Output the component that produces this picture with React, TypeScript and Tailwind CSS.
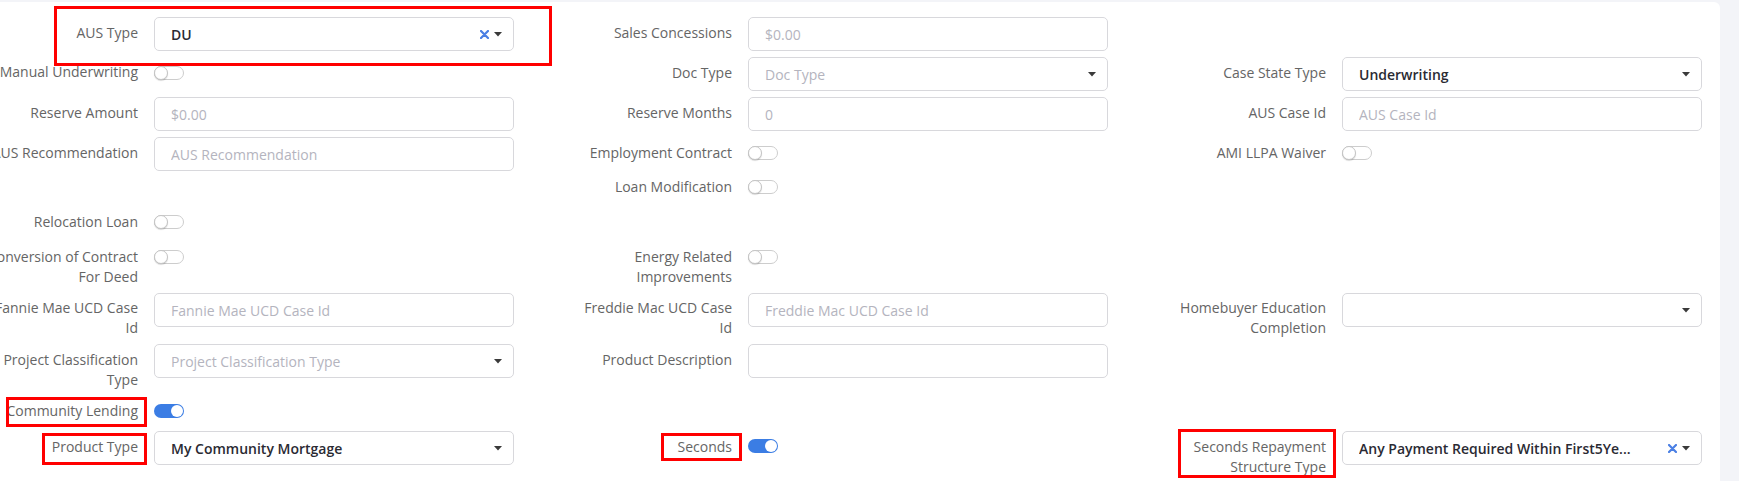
import React from 'react';

type Field =
  | null
  | {
      label: string[];
      kind: 'input' | 'select' | 'toggle';
      placeholder?: string;
      value?: string;
      clear?: boolean;
      on?: boolean;
      lp?: string; // label padding-top
      tp?: string; // toggle padding-top
    };

const LABEL = 'w-[160px] shrink-0 text-right text-[14px] leading-5 text-[#656565]';

function Caret() {
  return (
    <svg width="8" height="5" viewBox="0 0 8 5" className="shrink-0">
      <path d="M0 0h8L4 4.5z" fill="#3a3a3a" />
    </svg>
  );
}

function ClearX() {
  return (
    <svg width="9" height="9" viewBox="0 0 9 9" className="shrink-0">
      <path d="M1 1l7 7M8 1L1 8" stroke="#4a7fe4" strokeWidth="2.2" strokeLinecap="round" />
    </svg>
  );
}

function Toggle({ on }: { on?: boolean }) {
  if (on)
    return (
      <span className="flex h-[14px] w-[30px] items-center justify-end rounded-full bg-[#3b7de4] pr-[1px]">
        <span className="h-[12px] w-[12px] rounded-full bg-white" />
      </span>
    );
  return (
    <span className="flex h-[14px] w-[30px] items-center rounded-full border border-[#cdcdcd] bg-white">
      <span className="ml-[-1px] h-[14px] w-[14px] rounded-full border border-[#c4c4c4] bg-white shadow-[0_1px_1px_rgba(0,0,0,0.15)]" />
    </span>
  );
}

function Control({ f }: { f: NonNullable<Field> }) {
  if (f.kind === 'toggle')
    return (
      <div className={`flex h-[29px] w-[360px] items-start ${f.tp ?? 'pt-[3px]'}`}>
        <Toggle on={f.on} />
      </div>
    );
  const text = f.value ? (
    <span className="truncate text-[14px] font-semibold text-[#2a2a33]">{f.value}</span>
  ) : (
    <span className="truncate text-[14px] text-[#b4b4be]">{f.placeholder ?? ''}</span>
  );
  return (
    <div className="flex h-[34px] w-[360px] items-center rounded-[5px] border border-[#d8d8dc] bg-white pl-[16px] pr-[11px]">
      <div className="flex-1 overflow-hidden">{text}</div>
      {f.kind === 'select' && (
        <div className="flex items-center gap-[5px]">
          {f.clear && <ClearX />}
          <Caret />
        </div>
      )}
    </div>
  );
}

function Cell({ f }: { f: Field }) {
  return (
    <div className="flex w-[594px] shrink-0 items-start gap-4 pl-[40px] pr-[18px]">
      {f && (
        <>
          <div className={`${LABEL} ${f.lp ?? 'pt-[6px]'}`}>
            {f.label.map((l, i) => (
              <div key={i} className="whitespace-nowrap">{l}</div>
            ))}
          </div>
          <Control f={f} />
        </>
      )}
    </div>
  );
}

const rows: Field[][] = [
  [
    { label: ['AUS Type'], kind: 'select', value: 'DU', clear: true },
    { label: ['Sales Concessions'], kind: 'input', placeholder: '$0.00' },
    null,
  ],
  [
    { label: ['Manual Underwriting'], kind: 'toggle', lp: 'pt-[5px]', tp: 'pt-[9px]' },
    { label: ['Doc Type'], kind: 'select', placeholder: 'Doc Type' },
    { label: ['Case State Type'], kind: 'select', value: 'Underwriting' },
  ],
  [
    { label: ['Reserve Amount'], kind: 'input', placeholder: '$0.00' },
    { label: ['Reserve Months'], kind: 'input', placeholder: '0' },
    { label: ['AUS Case Id'], kind: 'input', placeholder: 'AUS Case Id' },
  ],
  [
    { label: ['AUS Recommendation'], kind: 'input', placeholder: 'AUS Recommendation' },
    { label: ['Employment Contract'], kind: 'toggle', lp: 'pt-[6px]', tp: 'pt-[9px]' },
    { label: ['AMI LLPA Waiver'], kind: 'toggle', lp: 'pt-[6px]', tp: 'pt-[9px]' },
  ],
  [null, { label: ['Loan Modification'], kind: 'toggle', lp: 'pt-0', tp: 'pt-[3px]' }, null],
  [{ label: ['Relocation Loan'], kind: 'toggle', lp: 'pt-0', tp: 'pt-[3px]' }, null, null],
  [
    { label: ['Conversion of Contract', 'For Deed'], kind: 'toggle', lp: 'pt-0', tp: 'pt-[3px]' },
    { label: ['Energy Related', 'Improvements'], kind: 'toggle', lp: 'pt-0', tp: 'pt-[3px]' },
    null,
  ],
  [
    { label: ['Fannie Mae UCD Case', 'Id'], kind: 'input', placeholder: 'Fannie Mae UCD Case Id', lp: 'pt-[5px]' },
    { label: ['Freddie Mac UCD Case', 'Id'], kind: 'input', placeholder: 'Freddie Mac UCD Case Id', lp: 'pt-[5px]' },
    { label: ['Homebuyer Education', 'Completion'], kind: 'select', lp: 'pt-[5px]' },
  ],
  [
    { label: ['Project Classification', 'Type'], kind: 'select', placeholder: 'Project Classification Type' },
    { label: ['Product Description'], kind: 'input' },
    null,
  ],
  [{ label: ['Community Lending'], kind: 'toggle', on: true, lp: 'pt-[5px]', tp: 'pt-[8px]' }, null, null],
  [
    { label: ['Product Type'], kind: 'select', value: 'My Community Mortgage' },
    { label: ['Seconds'], kind: 'toggle', on: true, lp: 'pt-[6px]', tp: 'pt-[8px]' },
    {
      label: ['Seconds Repayment', 'Structure Type'],
      kind: 'select',
      value: 'Any Payment Required Within First5Ye...',
      clear: true,
    },
  ],
];

export default function App() {
  return (
    <div
      className="relative h-[481px] w-[1739px] overflow-hidden bg-[#f3f4f8]"
      style={{ fontFamily: '"Open Sans", "Noto Sans", sans-serif' }}
    >
      <div className="mt-[2px] h-[479px] w-[1720px] overflow-hidden rounded-tr-[6px] bg-white">
        <div className="ml-[-62px] w-[1782px] pt-[15px]">
          {rows.map((r, i) => (
            <div key={i} className="mb-[6px] flex items-start">
              {r.map((f, j) => (
                <Cell key={j} f={f} />
              ))}
            </div>
          ))}
        </div>
      </div>

      {/* red annotation boxes */}
      <div className="absolute left-[54px] top-[6px] h-[60px] w-[498px] border-[3px] border-[#ff0000]" />
      <div className="absolute left-[6px] top-[397px] h-[30px] w-[141px] border-[3px] border-[#ff0000]" />
      <div className="absolute left-[42px] top-[433px] h-[32px] w-[105px] border-[3px] border-[#ff0000]" />
      <div className="absolute left-[661px] top-[433px] h-[28px] w-[81px] border-[3px] border-[#ff0000]" />
      <div className="absolute left-[1178px] top-[429px] h-[49px] w-[158px] border-[3px] border-[#ff0000]" />
    </div>
  );
}
